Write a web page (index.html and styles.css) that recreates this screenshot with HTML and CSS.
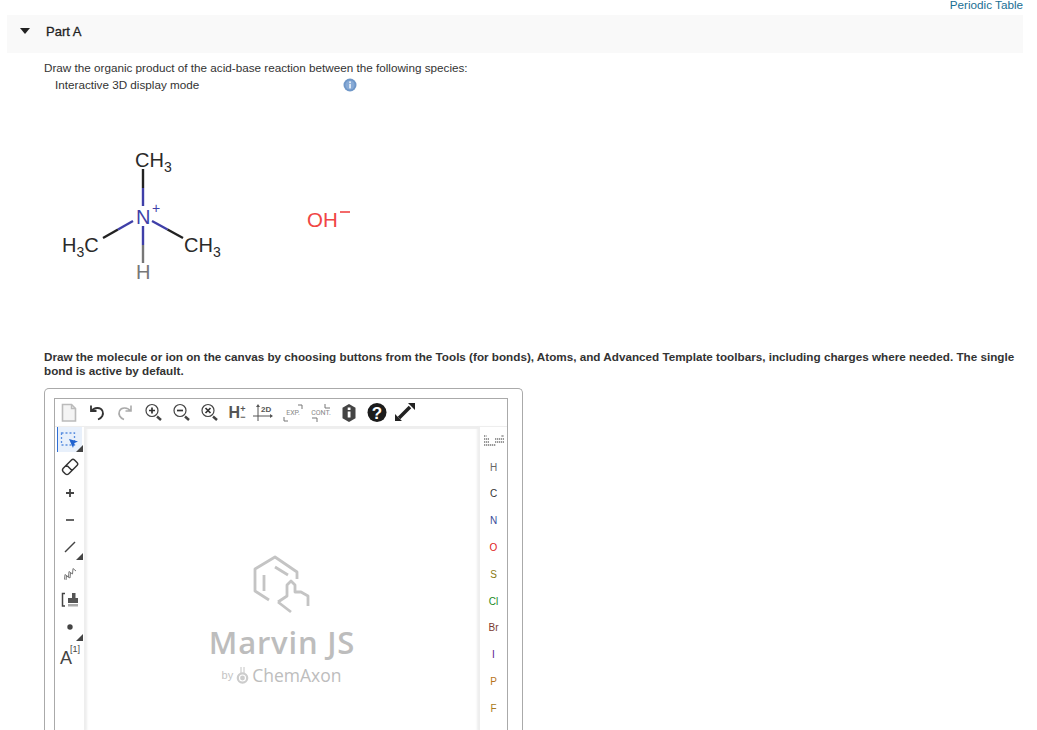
FILE: index.html
```html
<!DOCTYPE html>
<html lang="en">
<head>
    <meta charset="UTF-8">
    <title>Part A</title>
    <link rel="stylesheet" href="styles.css">
</head>
<body>
    <div class="periodic"><a href="#">Periodic Table</a></div>

    <div class="part-header">
        <span class="caret"></span>
        <span class="part-title">Part A</span>
    </div>

    <div class="question">
        <p class="prompt">Draw the organic product of the acid-base reaction between the following species:</p>
        <div class="display-mode">
            <span class="display-label">Interactive 3D display mode</span>
            <svg class="info-dot" width="14" height="14" viewBox="0 0 14 14">
                <circle cx="7" cy="7" r="6.5" fill="#6f97c8"/>
                <circle cx="7" cy="7" r="4.6" fill="#87aad6"/>
                <rect x="6.2" y="5.8" width="1.7" height="4.6" fill="#e9f0f8"/>
                <rect x="6.2" y="3.4" width="1.7" height="1.6" fill="#e9f0f8"/>
            </svg>
        </div>

        <svg class="molecule" width="320" height="170" viewBox="40 130 320 170">
            <g fill="none" stroke-width="2.4">
                <line x1="143" y1="169" x2="143" y2="188" stroke="#222"/>
                <line x1="143" y1="188" x2="143" y2="206" stroke="#3f3fa8"/>
                <line x1="103" y1="238" x2="118" y2="229.5" stroke="#222"/>
                <line x1="118" y1="229.5" x2="133" y2="221" stroke="#3f3fa8"/>
                <line x1="152" y1="221" x2="167.5" y2="229.5" stroke="#3f3fa8"/>
                <line x1="167.5" y1="229.5" x2="183" y2="238" stroke="#222"/>
                <line x1="143" y1="226" x2="143" y2="245" stroke="#3f3fa8"/>
                <line x1="143" y1="245" x2="143" y2="263" stroke="#777"/>
            </g>
            <g class="atoms">
                <text x="135" y="167">CH<tspan class="sub" dy="5">3</tspan></text>
                <text class="n" x="136" y="224">N</text>
                <text class="n plus" x="152" y="213">+</text>
                <text x="62" y="252">H<tspan class="sub" dy="5">3</tspan><tspan dy="-5">C</tspan></text>
                <text x="184" y="252">CH<tspan class="sub" dy="5">3</tspan></text>
                <text class="h" x="136" y="279">H</text>
                <text class="oh" x="307" y="227">OH</text>
            </g>
            <line x1="340" y1="212" x2="350" y2="212" stroke="#f04545" stroke-width="1.6"/>
        </svg>

        <p class="instructions">Draw the molecule or ion on the canvas by choosing buttons from the Tools (for bonds), Atoms, and Advanced Template toolbars, including charges where needed. The single bond is active by default.</p>

        <div class="editor-frame">
            <div class="editor">
                <div class="top-bar">
                    <svg class="tool" viewBox="0 0 28 28"><path d="M7.500 5.500h9l4 4v12.500h-13z" fill="#f4f4f4" stroke="#bbb" stroke-width="1.600"/><path d="M16.500 5.500v4h4" fill="none" stroke="#bbb" stroke-width="1.400"/></svg>
                    <svg class="tool" viewBox="0 0 28 28"><path d="M8 6.500v5.500h5.500M8.500 12c2.500-3.500 9-4.500 11 0 1.500 3.500-.5 7-4.500 8.500" fill="none" stroke="#333" stroke-width="1.800"/></svg>
                    <svg class="tool" viewBox="0 0 28 28"><path d="M20 6.500v5.500h-5.500M19.500 12c-2.500-3.500-9-4.500-11 0-1.500 3.500.5 7 4.500 8.500" fill="none" stroke="#aaa" stroke-width="1.600"/></svg>
                    <svg class="tool" viewBox="0 0 28 28"><circle cx="13" cy="11.500" r="6" fill="none" stroke="#444" stroke-width="1.200"/><path d="M10 11.500h6M13 8.500v6" stroke="#333" stroke-width="1.700"/><path d="M18 17.500l4 3.500" stroke="#444" stroke-width="2.400"/></svg>
                    <svg class="tool" viewBox="0 0 28 28"><circle cx="13" cy="11.500" r="6" fill="none" stroke="#444" stroke-width="1.200"/><path d="M10 11.500h6" stroke="#333" stroke-width="1.700"/><path d="M18 17.500l4 3.500" stroke="#444" stroke-width="2.400"/></svg>
                    <svg class="tool" viewBox="0 0 28 28"><circle cx="13" cy="11.500" r="6" fill="none" stroke="#444" stroke-width="1.200"/><path d="M10.500 9l5 5M15.500 9l-5 5" stroke="#333" stroke-width="1.700"/><path d="M18 17.500l4 3.500" stroke="#444" stroke-width="2.400"/></svg>
                    <div class="tool h-tool"><span class="h-big">H</span><span class="h-signs">+<br>−</span></div>
                    <svg class="tool" viewBox="0 0 28 28"><path d="M7 7v15M2 17h19" stroke="#555" stroke-width="1" fill="none"/><path d="M7 5l-2 3h4zM22 17l-3-2v4z" fill="#555"/><text class="mini-2d" x="10" y="13">2D</text></svg>
                    <svg class="tool" viewBox="0 0 28 28"><path d="M19 6h4v4M5 18v4h4" fill="none" stroke="#777" stroke-width="1"/><text class="mini-txt" x="14" y="16">EXP.</text></svg>
                    <svg class="tool" viewBox="0 0 28 28"><path d="M18 5v4h5M5 19h5v4" fill="none" stroke="#777" stroke-width="1"/><text class="mini-txt" x="14" y="16">CONT.</text></svg>
                    <svg class="tool" viewBox="0 0 28 28"><path d="M14 5l6.500 3.800v10.400L14 23l-6.500-3.800V8.800z" fill="#444"/><rect x="12.700" y="12.500" width="2.800" height="6" fill="#fff"/><rect x="12.700" y="8.500" width="2.800" height="2.500" fill="#fff"/></svg>
                    <svg class="tool" viewBox="0 0 28 28"><circle cx="14" cy="13.500" r="9.500" fill="#1c1c1c"/><text class="qmark" x="14" y="19.500">?</text></svg>
                    <svg class="tool" viewBox="0 0 28 28"><path d="M8 19l11-11" stroke="#222" stroke-width="3.500"/><path d="M17 4h7v7zM4 15v7h7z" fill="#222"/></svg>
                </div>
                <div class="work-area">
                    <div class="left-bar">
                        <div class="side-tool selected">
                            <svg width="24" height="24" viewBox="0 0 24 24"><rect x="3.500" y="5" width="13" height="12" fill="none" stroke="#5a8ee0" stroke-width="1.300" stroke-dasharray="2 2"/><path d="M11 11l9 2.500-3.500 1.500-1.500 5z" fill="#1f62d0"/></svg>
                            <span class="corner"></span>
                        </div>
                        <div class="side-tool">
                            <svg width="24" height="24" viewBox="0 0 24 24"><path d="M5 14.500L13.500 6c1-1 2-1 3 0l2.500 2.500c1 1 1 2 0 3L10.500 20c-1 .800-2 .800-3 0L5 17.500c-.800-1-.800-2 0-3zM8.500 11l6 6" fill="#fff" stroke="#333" stroke-width="1.500"/></svg>
                        </div>
                        <div class="side-tool"><svg width="24" height="24" viewBox="0 0 24 24"><path d="M8 12h8M12 8v8" stroke="#444" stroke-width="1.800"/></svg></div>
                        <div class="side-tool"><svg width="24" height="24" viewBox="0 0 24 24"><path d="M8 12h8" stroke="#555" stroke-width="1.800"/></svg></div>
                        <div class="side-tool">
                            <svg width="24" height="24" viewBox="0 0 24 24"><path d="M7 17L17 7" stroke="#444" stroke-width="1.500"/></svg>
                            <span class="corner"></span>
                        </div>
                        <div class="side-tool"><svg width="24" height="24" viewBox="0 0 24 24"><path d="M6.500 17.500l.500-5 3.500 2.500.500-5.500 3.500 2.500.500-5.500 3 2.500M8 18l.500-4 3.500 2 .500-5" fill="none" stroke="#777" stroke-width="1"/></svg></div>
                        <div class="side-tool"><svg width="24" height="24" viewBox="0 0 24 24"><path d="M7 5.500H4.500v12.500H7" fill="none" stroke="#444" stroke-width="1.500"/><path d="M14 5h3.500v5h2.500v5H10v-5h4z" fill="#555"/><rect x="10" y="16" width="10" height="2.500" fill="#aaa"/></svg></div>
                        <div class="side-tool">
                            <svg width="24" height="24" viewBox="0 0 24 24"><circle cx="12" cy="12" r="2.700" fill="#444"/></svg>
                            <span class="corner"></span>
                        </div>
                        <div class="side-tool map-tool"><span class="map-a">A</span><span class="map-n">[1]</span></div>
                    </div>
                    <div class="canvas">
                        <svg class="logo-mark" width="60" height="60" viewBox="0 0 60 60">
                            <g fill="none" stroke="#c4c4c4" stroke-width="2.800" stroke-linejoin="round">
                                <path d="M45 24V17L23 2 3 14V36L17 45"/>
                                <path d="M12 20V36M23 12L36 20"/>
                                <path d="M26 47L35 41V30L39 26 43 30V37L49 37 56 41V51M26 47L39 57"/>
                            </g>
                        </svg>
                        <div class="marvin">Marvin JS</div>
                        <div class="by-line">
                            <span class="by">by</span>
                            <svg width="13" height="20" viewBox="0 0 13 20"><path d="M5 2v6M8 2v6" stroke="#c4c4c4" stroke-width="1"/><circle cx="6.500" cy="13" r="5.800" fill="#ccc"/><circle cx="6.500" cy="13" r="3" fill="none" stroke="#fff" stroke-width="1.200"/></svg>
                            <span class="chemaxon">ChemAxon</span>
                        </div>
                    </div>
                    <div class="right-bar">
                        <div class="atom">
                            <svg width="20" height="11" viewBox="0 0 20 11"><path d="M0 1h2.500M17.500 1H20M0 4h5M11 4h9M0 7h5M11 7h9M0 10h12" stroke="#777" stroke-width="1.500" stroke-dasharray="1.300 .7" fill="none"/></svg>
                        </div>
                        <div class="atom a-h">H</div>
                        <div class="atom a-c">C</div>
                        <div class="atom a-n">N</div>
                        <div class="atom a-o">O</div>
                        <div class="atom a-s">S</div>
                        <div class="atom a-cl">Cl</div>
                        <div class="atom a-br">Br</div>
                        <div class="atom a-i">I</div>
                        <div class="atom a-p">P</div>
                        <div class="atom a-f">F</div>
                    </div>
                </div>
            </div>
        </div>
    </div>
</body>
</html>
```

FILE: styles.css
```css
html, body {
    height: 730px;
    overflow: hidden;
}
body {
    margin: 0;
    padding: 0;
    background-color: white;
    font-family: "Liberation Sans", Arial, sans-serif;
    font-size: 11.7px;
    color: #333;
}
.periodic {
    margin: -2px 14px 3px 0;
    line-height: 14px;
    text-align: right;
}
.periodic a {
    color: #1a6f94;
    text-decoration: none;
}
.part-header {
    box-sizing: border-box;
    display: flex;
    align-items: center;
    width: 1016px;
    height: 38px;
    margin-left: 7px;
    padding-bottom: 6px;
    background-color: #f9f9f9;
}
.caret {
    width: 0;
    height: 0;
    margin-left: 13px;
    border-left: 5px solid transparent;
    border-right: 5px solid transparent;
    border-top: 6px solid #222;
}
.part-title {
    margin-left: 16px;
    font-size: 13px;
    color: #222;
    -webkit-text-stroke: 0.3px #222;
}
.question {
    padding: 8px 8px 0 44px;
}
.prompt {
    margin: 0;
    line-height: 14px;
}
.display-mode {
    display: flex;
    align-items: center;
    height: 19px;
    padding-left: 11px;
}
.display-label {
    width: 288px;
}
.molecule {
    display: block;
    margin: 36px 0 0 -4px;
}
.atoms text {
    font-size: 20px;
    fill: #2a2a2a;
}
.atoms .sub {
    font-size: 14px;
}
.atoms .n {
    fill: #3f3fa8;
}
.atoms .plus {
    font-size: 14px;
}
.atoms .h {
    fill: #777;
}
.atoms .oh {
    font-size: 20.5px;
    fill: #f04545;
}
.instructions {
    margin: 50px 0 0 0;
    font-weight: bold;
    line-height: 14px;
}
.editor-frame {
    box-sizing: border-box;
    width: 479px;
    height: 342px;
    margin-top: 10px;
    padding: 9px 14px 0 9px;
    border: 1px solid #aaa;
    border-bottom: none;
    border-radius: 5px 5px 0 0;
}
.editor {
    display: flex;
    flex-direction: column;
    height: 100%;
    border: 1px solid #aaa;
    border-bottom: none;
}
.top-bar {
    display: flex;
    flex: none;
    height: 27px;
}
.tool {
    width: 28px;
    height: 28px;
    flex: none;
}
.h-tool {
    display: flex;
    align-items: center;
    justify-content: center;
    color: #555;
}
.h-big {
    font-size: 16px;
    font-weight: bold;
}
.h-signs {
    font-size: 9px;
    font-weight: bold;
    line-height: 8px;
}
.mini-2d {
    font: bold 8px "Liberation Sans", sans-serif;
    fill: #555;
}
.mini-txt {
    font: 7px "Roboto", sans-serif;
    fill: #888;
    text-anchor: middle;
}
.qmark {
    font: bold 17px "Liberation Sans", sans-serif;
    fill: #fff;
    text-anchor: middle;
}
.work-area {
    display: flex;
    flex: 1;
    min-height: 0;
    border-top: 1px solid #eee;
}
.left-bar {
    flex: none;
    width: 29px;
    border-right: 1px solid #eee;
    box-shadow: 2px 0 2px #eee;
}
.side-tool {
    position: relative;
    display: flex;
    align-items: center;
    justify-content: center;
    width: 25px;
    height: 26.8px;
    margin-left: 2px;
}
.selected {
    box-sizing: border-box;
    height: 25px;
    margin-bottom: 1px;
    background-color: #e8f0fb;
    border-left: 1px solid #2f6fd6;
}
.corner {
    position: absolute;
    right: -1px;
    bottom: 0;
    border-left: 7px solid transparent;
    border-bottom: 7px solid #444;
}
.map-tool {
    align-items: flex-end;
    justify-content: flex-start;
}
.map-a {
    margin-left: 3px;
    font-size: 18px;
    line-height: 18px;
    color: #444;
}
.map-n {
    align-self: flex-start;
    margin-left: -2px;
    font-size: 9px;
    line-height: 16px;
    color: #444;
}
.canvas {
    flex: 1;
    display: flex;
    flex-direction: column;
    align-items: center;
    padding-top: 128px;
    box-shadow: inset 0 2px 1px #eee;
}
.marvin {
    margin-top: 5px;
    font-family: "Open Sans", sans-serif;
    font-size: 31px;
    font-weight: 600;
    letter-spacing: 0.8px;
    line-height: 44px;
    color: #bdbdbd;
}
.by-line {
    display: flex;
    align-items: center;
    gap: 3px;
    margin: -1px 0 0 -1px;
    color: #c4c4c4;
}
.by {
    font-size: 11px;
}
.chemaxon {
    font-family: "Open Sans", sans-serif;
    font-size: 17.5px;
    color: #bdbdbd;
}
.right-bar {
    flex: none;
    width: 27px;
    padding-top: 0;
    border-left: 1px solid #eee;
    box-shadow: -2px 0 2px #eee;
}
.atom {
    display: flex;
    align-items: center;
    justify-content: center;
    height: 26.8px;
    font-size: 10px;
}
.a-h { color: #666; }
.a-c { color: #333; }
.a-n { color: #3a4a9a; }
.a-o { color: #e02020; }
.a-s { color: #8a7a10; }
.a-cl { color: #1a8a1a; }
.a-br { color: #7a3a30; }
.a-i { color: #5a1a8a; }
.a-p { color: #b8741a; }
.a-f { color: #a87a20; }
```
